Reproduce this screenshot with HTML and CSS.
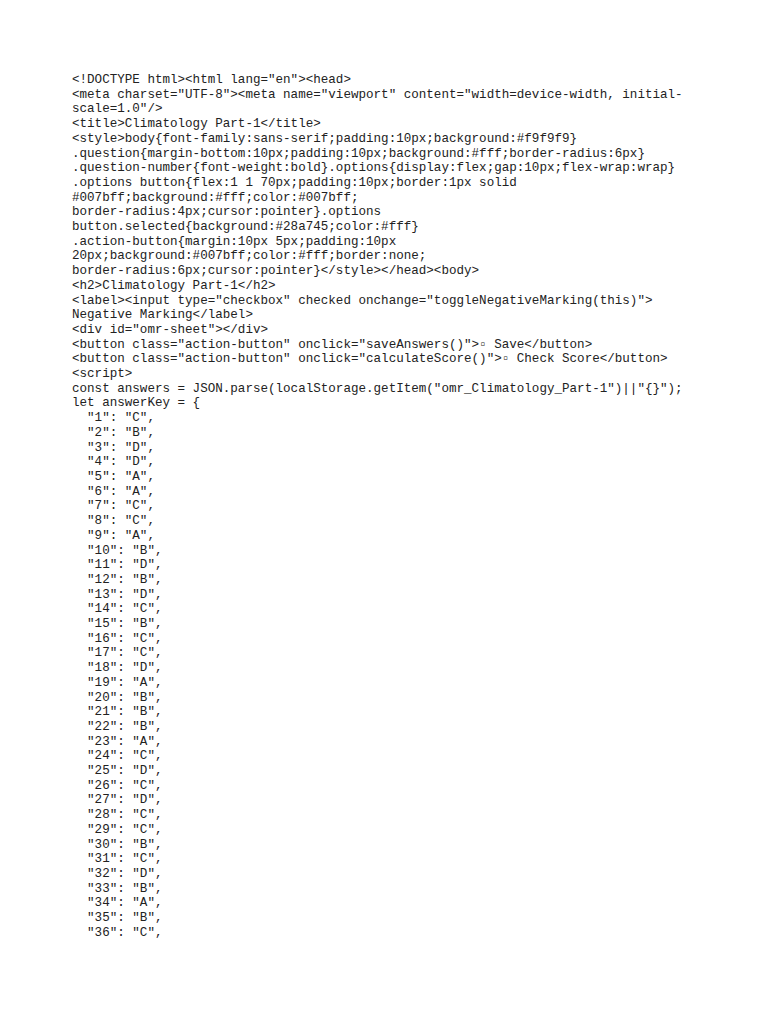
FILE: index.html
```html
<!DOCTYPE html>
<html lang="en">
<head>
<meta charset="UTF-8">
<title>Climatology Part-1</title>
<link rel="stylesheet" href="styles.css">
</head>
<body>
<pre class="source">&lt;!DOCTYPE html&gt;&lt;html lang="en"&gt;&lt;head&gt;
&lt;meta charset="UTF-8"&gt;&lt;meta name="viewport" content="width=device-width, initial-
scale=1.0"/&gt;
&lt;title&gt;Climatology Part-1&lt;/title&gt;
&lt;style&gt;body{font-family:sans-serif;padding:10px;background:#f9f9f9}
.question{margin-bottom:10px;padding:10px;background:#fff;border-radius:6px}
.question-number{font-weight:bold}.options{display:flex;gap:10px;flex-wrap:wrap}
.options button{flex:1 1 70px;padding:10px;border:1px solid
#007bff;background:#fff;color:#007bff;
border-radius:4px;cursor:pointer}.options
button.selected{background:#28a745;color:#fff}
.action-button{margin:10px 5px;padding:10px
20px;background:#007bff;color:#fff;border:none;
border-radius:6px;cursor:pointer}&lt;/style&gt;&lt;/head&gt;&lt;body&gt;
&lt;h2&gt;Climatology Part-1&lt;/h2&gt;
&lt;label&gt;&lt;input type="checkbox" checked onchange="toggleNegativeMarking(this)"&gt;
Negative Marking&lt;/label&gt;
&lt;div id="omr-sheet"&gt;&lt;/div&gt;
&lt;button class="action-button" onclick="saveAnswers()"&gt;▫ Save&lt;/button&gt;
&lt;button class="action-button" onclick="calculateScore()"&gt;▫ Check Score&lt;/button&gt;
&lt;script&gt;
const answers = JSON.parse(localStorage.getItem("omr_Climatology_Part-1")||"{}");
let answerKey = {
  "1": "C",
  "2": "B",
  "3": "D",
  "4": "D",
  "5": "A",
  "6": "A",
  "7": "C",
  "8": "C",
  "9": "A",
  "10": "B",
  "11": "D",
  "12": "B",
  "13": "D",
  "14": "C",
  "15": "B",
  "16": "C",
  "17": "C",
  "18": "D",
  "19": "A",
  "20": "B",
  "21": "B",
  "22": "B",
  "23": "A",
  "24": "C",
  "25": "D",
  "26": "C",
  "27": "D",
  "28": "C",
  "29": "C",
  "30": "B",
  "31": "C",
  "32": "D",
  "33": "B",
  "34": "A",
  "35": "B",
  "36": "C",</pre>
</body>
</html>
```

FILE: styles.css
```css
html, body {
  margin: 0;
  padding: 0;
  background: #ffffff;
}

body {
  padding: 73px 0 0 72px;
}

.source {
  margin: 0;
  font-family: "Liberation Mono", "DejaVu Sans Mono", monospace;
  font-size: 12.57px;
  line-height: 14.7px;
  color: #222222;
  white-space: pre;
}
```
